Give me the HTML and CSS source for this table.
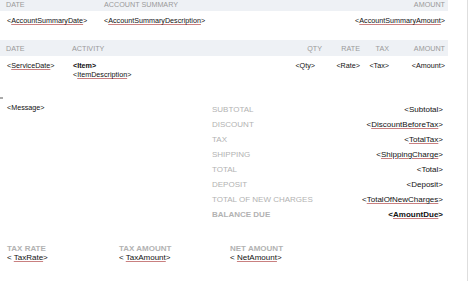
FILE: index.html
```html
<!DOCTYPE html>
<html lang="en">
<head>
  <meta charset="UTF-8" />
  <meta name="viewport" content="width=device-width, initial-scale=1.0" />
  <title>Invoice Template</title>
  <link rel="stylesheet" href="styles.css">
</head>
<body>

  <div class="page">

    <!-- account summary -->
    <div class="summary">
      <div class="band summary-grid">
        <div>DATE</div>
        <div>ACCOUNT SUMMARY</div>
        <div class="right">AMOUNT</div>
      </div>
      <div class="row summary-grid">
        <div class="nudge">&lt;<span class="field">AccountSummaryDate</span>&gt;</div>
        <div>&lt;<span class="field">AccountSummaryDescription</span>&gt;</div>
        <div class="right">&lt;<span class="field">AccountSummaryAmount</span>&gt;</div>
      </div>
    </div>

    <!-- activity lines -->
    <div class="activity">
      <div class="band activity-grid">
        <div>DATE</div>
        <div>ACTIVITY</div>
        <div class="right">QTY</div>
        <div class="right">RATE</div>
        <div class="right">TAX</div>
        <div class="right">AMOUNT</div>
      </div>
      <div class="row activity-grid">
        <div class="nudge">&lt;<span class="field">ServiceDate</span>&gt;</div>
        <div class="nudge">
          <div class="item">&lt;Item&gt;</div>
          <div>&lt;<span class="field">ItemDescription</span>&gt;</div>
        </div>
        <div class="right qty">&lt;Qty&gt;</div>
        <div class="right">&lt;Rate&gt;</div>
        <div class="right">&lt;Tax&gt;</div>
        <div class="right">&lt;Amount&gt;</div>
      </div>
    </div>

    <div class="marker"></div>

    <!-- message + totals -->
    <div class="bottom">
      <div class="message">&lt;Message&gt;</div>
      <div class="totals">
        <div class="total-row"><span class="label">SUBTOTAL</span><span>&lt;Subtotal&gt;</span></div>
        <div class="total-row"><span class="label">DISCOUNT</span><span>&lt;<span class="field">DiscountBeforeTax</span>&gt;</span></div>
        <div class="total-row"><span class="label">TAX</span><span>&lt;<span class="field">TotalTax</span>&gt;</span></div>
        <div class="total-row"><span class="label">SHIPPING</span><span>&lt;<span class="field">ShippingCharge</span>&gt;</span></div>
        <div class="total-row"><span class="label">TOTAL</span><span>&lt;Total&gt;</span></div>
        <div class="total-row"><span class="label">DEPOSIT</span><span>&lt;Deposit&gt;</span></div>
        <div class="total-row"><span class="label">TOTAL OF NEW CHARGES</span><span>&lt;<span class="field">TotalOfNewCharges</span>&gt;</span></div>
        <div class="total-row due"><span class="label">BALANCE DUE</span><span>&lt;<span class="field">AmountDue</span>&gt;</span></div>
      </div>
    </div>

    <!-- tax summary -->
    <div class="tax-summary">
      <div>
        <div class="tax-label">TAX RATE</div>
        <div>&lt; <span class="field">TaxRate</span>&gt;</div>
      </div>
      <div>
        <div class="tax-label">TAX AMOUNT</div>
        <div>&lt; <span class="field">TaxAmount</span>&gt;</div>
      </div>
      <div>
        <div class="tax-label">NET AMOUNT</div>
        <div>&lt; <span class="field">NetAmount</span>&gt;</div>
      </div>
    </div>

  </div>

</body>
</html>
```

FILE: styles.css
```css
* {
  margin: 0;
  padding: 0;
  box-sizing: border-box;
  font-family: 'Liberation Sans', Arial, sans-serif;
}

body {
  background-color: #fff;
  color: #111;
  overflow: hidden;
}

.page {
  width: 468px;
  height: 100vh;
  border-right: 1px solid #dedede;
  font-size: 7.2px;
  line-height: 9px;
}

.right {
  text-align: right;
}

.field {
  text-decoration: underline;
  text-decoration-color: #c98080;
}

.nudge {
  padding-left: 1px;
}

.band {
  width: 448px;
  background-color: #eef1f5;
  color: #9a9a9a;
  padding: 0 3px 2px 6px;
}

.row {
  width: 448px;
  padding: 5px 3px 0 6px;
}

.summary-grid {
  display: grid;
  grid-template-columns: 98px 1fr auto;
}

.activity {
  margin-top: 15px;
}

.activity .band {
  padding-top: 4px;
  padding-bottom: 3px;
}

.activity .row {
  padding-top: 5px;
}

.activity-grid {
  display: grid;
  grid-template-columns: 66px 1fr 40px 38px 29px 56px;
}

.item {
  font-weight: bold;
}

.qty {
  padding-right: 7px;
}

.marker {
  width: 3px;
  height: 2px;
  margin-top: 18px;
  background-color: #aaa;
}

.bottom {
  display: flex;
  margin-top: 3px;
}

.message {
  width: 212px;
  padding-left: 7px;
  padding-top: 1px;
}

.totals {
  width: 231px;
  font-size: 8px;
  line-height: 15px;
}

.total-row {
  display: flex;
  justify-content: space-between;
}

.total-row .label {
  color: #b2b2b2;
}

.total-row.due {
  font-weight: bold;
}

.tax-summary {
  display: grid;
  grid-template-columns: 112px 111px auto;
  padding-left: 7px;
  margin-top: 22px;
  font-size: 8px;
  line-height: 9px;
}

.tax-label {
  font-weight: bold;
  color: #b2b2b2;
}
```
